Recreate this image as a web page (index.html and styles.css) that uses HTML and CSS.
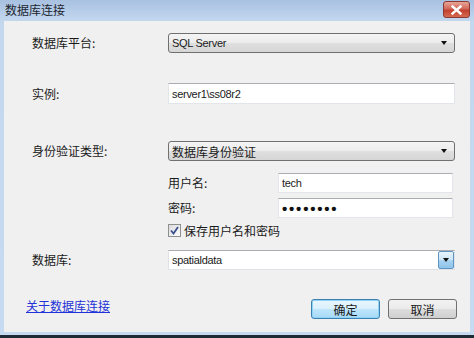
FILE: index.html
```html
<!DOCTYPE html>
<html lang="zh-CN">
<head>
  <meta charset="UTF-8" />
  <title>数据库连接</title>
  <link rel="stylesheet" href="styles.css">
</head>
<body>
  <div class="window">
    <div class="titlebar">
      <span class="title">数据库连接</span>
      <span class="close">
        <svg width="11" height="10" viewBox="0 0 11 10"><path d="M1.5 1.5 L9.5 8.5 M9.5 1.5 L1.5 8.5" stroke="#fff" stroke-width="2.4" stroke-linecap="square"/></svg>
      </span>
    </div>

    <div class="client">
      <div class="row r-platform">
        <label>数据库平台:</label>
        <div class="select"><span class="latin">SQL Server</span><i class="arrow"></i></div>
      </div>

      <div class="row r-instance">
        <label>实例:</label>
        <div class="textbox latin">server1\ss08r2</div>
      </div>

      <div class="row r-auth">
        <label>身份验证类型:</label>
        <div class="select"><span>数据库身份验证</span><i class="arrow"></i></div>
      </div>

      <div class="subrow r-user">
        <label>用户名:</label>
        <div class="textbox latin">tech</div>
      </div>

      <div class="subrow r-pwd">
        <label>密码:</label>
        <div class="textbox dots">••••••••</div>
      </div>

      <div class="check-row">
        <span class="checkbox">
          <svg width="9" height="9" viewBox="0 0 9 9"><path d="M1 4.5 L3.5 7.5 L8 1" fill="none" stroke="#3b4f8e" stroke-width="1.8"/></svg>
        </span>
        <span>保存用户名和密码</span>
      </div>

      <div class="row r-db">
        <label>数据库:</label>
        <div class="combo">
          <span class="latin">spatialdata</span>
          <span class="drop"><i class="arrow"></i></span>
        </div>
      </div>

      <div class="footer">
        <a href="#" class="link">关于数据库连接</a>
        <div class="buttons">
          <button class="btn default">确定</button>
          <button class="btn">取消</button>
        </div>
      </div>
    </div>
  </div>
</body>
</html>
```

FILE: styles.css
```css
* {
  box-sizing: border-box;
}
body {
  margin: 0;
  background: #1d2b35;
  font-family: "Noto Sans CJK SC", "Liberation Sans", sans-serif;
  font-size: 12px;
  color: #1a1a1a;
}
.window {
  width: 474px;
  height: 335px;
  padding: 0 4px 3px;
  background: linear-gradient(to bottom, #a8c1e1 0, #c3d7ef 21px, #c6dbf1 100%);
  display: flex;
  flex-direction: column;
}
.titlebar {
  height: 21px;
  display: flex;
  align-items: flex-start;
  justify-content: space-between;
}
.title {
  margin: 3px 0 0 1px;
  font-size: 12px;
  line-height: 14px;
  color: #1e2630;
}
.close {
  margin-top: 1px;
  width: 27px;
  height: 17px;
  border: 1px solid #8a3a32;
  border-radius: 3px;
  background: linear-gradient(to bottom, #e8a596 0, #d1685a 45%, #c2402e 55%, #d66a52 100%);
  display: flex;
  align-items: center;
  justify-content: center;
}
.client {
  flex: 1;
  background: #f0f0f0;
  padding: 12px 15px 0 28px;
  display: flex;
  flex-direction: column;
}
.latin {
  font-family: "Liberation Sans", sans-serif;
  font-size: 11px;
  letter-spacing: -0.3px;
}
.row {
  display: grid;
  grid-template-columns: 136px 287px;
  align-items: center;
}
.row label, .subrow label {
  line-height: 14px;
}
.r-platform { height: 20px; }
.r-instance { height: 21px; margin-top: 30px; }
.r-auth { height: 20px; margin-top: 37px; }
.r-db { height: 20px; margin-top: 13px; }

.subrow {
  margin-left: 136px;
  display: grid;
  grid-template-columns: 110px 175px;
  align-items: center;
  height: 20px;
}
.r-user { margin-top: 12px; }
.r-pwd { margin-top: 5px; }

.select {
  height: 100%;
  border: 1px solid #707070;
  border-radius: 3px;
  background: linear-gradient(to bottom, #f4f4f4 0, #ececec 50%, #dfdfdf 51%, #d6d6d6 100%);
  display: flex;
  align-items: center;
  justify-content: space-between;
  padding: 0 7px 0 3px;
}
.arrow {
  display: block;
  width: 0;
  height: 0;
  border-left: 3.5px solid transparent;
  border-right: 3.5px solid transparent;
  border-top: 4px solid #111;
}
.textbox {
  height: 100%;
  background: #fff;
  border: 1px solid #e2e6eb;
  border-top-color: #abadb3;
  padding: 0 3px;
  display: flex;
  align-items: center;
}
.dots {
  font-family: "Liberation Sans", sans-serif;
  font-size: 15px;
  font-weight: bold;
  letter-spacing: 1.8px;
  color: #111;
}
.check-row {
  margin: 6px 0 0 136px;
  height: 13px;
  display: flex;
  align-items: center;
  gap: 3px;
  line-height: 14px;
}
.checkbox {
  width: 13px;
  height: 13px;
  border: 1px solid #8e8f8f;
  background: linear-gradient(to bottom right, #dcdcdc, #fbfbfb);
  display: flex;
  align-items: center;
  justify-content: center;
}
.combo {
  height: 100%;
  background: #fff;
  border: 1px solid #dfe3e8;
  border-top-color: #abadb3;
  display: flex;
  align-items: center;
  justify-content: space-between;
  padding-left: 3px;
}
.drop {
  width: 16px;
  height: 100%;
  border: 1px solid #5f95c2;
  border-radius: 2px;
  background: linear-gradient(to bottom, #e7f3fc 0, #cde6f8 50%, #a9d3f1 51%, #8ec3ea 100%);
  display: flex;
  align-items: center;
  justify-content: center;
}
.footer {
  margin: 29px -2px 0 -6px;
  display: flex;
  justify-content: space-between;
  align-items: flex-start;
}
.link {
  color: #1f33d6;
  text-decoration: underline;
  line-height: 14px;
  margin-top: 0;
}
.buttons {
  display: flex;
  gap: 8px;
}
.btn {
  width: 69px;
  height: 20px;
  padding: 0;
  font-family: "Noto Sans CJK SC", sans-serif;
  font-size: 12px;
  color: #1a1a1a;
  border: 1px solid #707070;
  border-radius: 3px;
  background: linear-gradient(to bottom, #f2f2f2 0, #ebebeb 50%, #dddddd 51%, #cfcfcf 100%);
}
.btn.default {
  border-color: #3c7fb1;
  background: linear-gradient(to bottom, #eaf6fd 0, #d9f0fc 50%, #bee6fd 51%, #a7d9f5 100%);
  box-shadow: inset 0 0 0 1px #8fd4f5;
}
```
